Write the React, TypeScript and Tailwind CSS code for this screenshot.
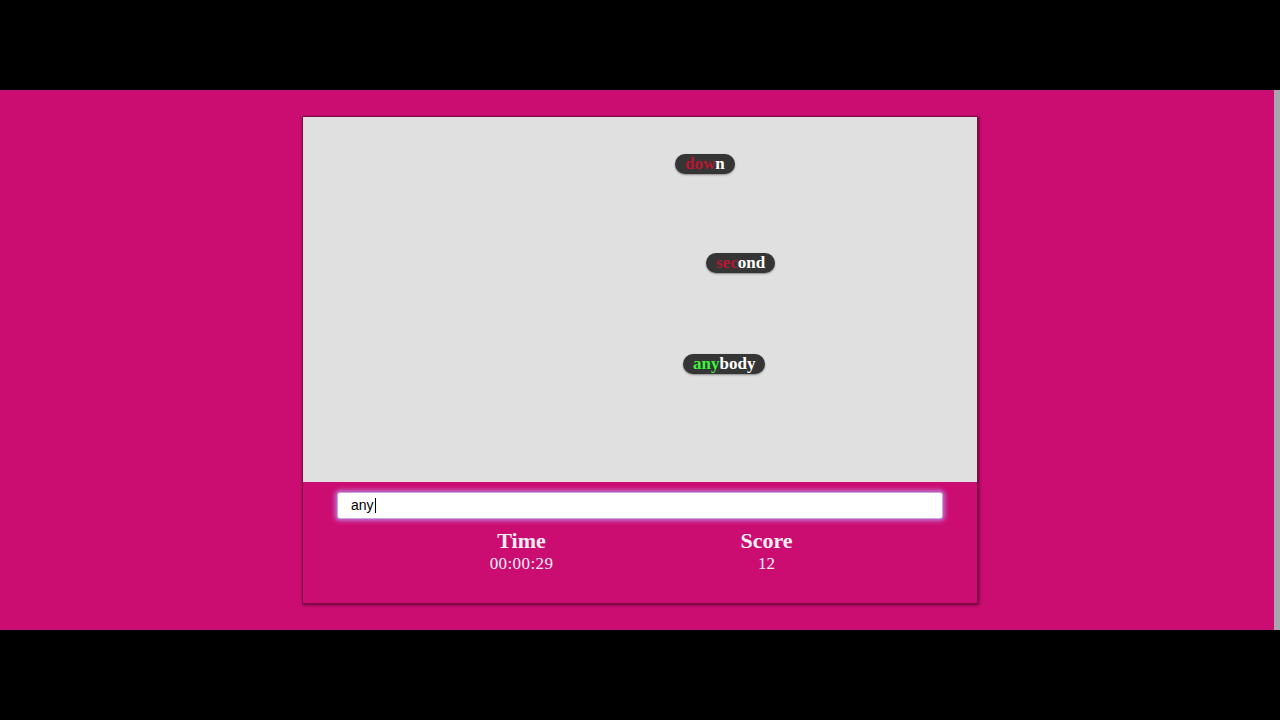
import React from "react";

function Pill({ left, top, hit, rest, hitColor }: { left: number; top: number; hit: string; rest: string; hitColor: string }) {
  return (
    <div
      className="absolute h-[20px] px-[10px] rounded-full bg-[#353535] shadow-[0_1px_2px_rgba(0,0,0,0.4)] flex items-center text-[17px] font-bold leading-[20px] text-white whitespace-nowrap"
      style={{ left, top, fontFamily: '"Liberation Serif", "Times New Roman", serif' }}
    >
      <span style={{ color: hitColor }}>{hit}</span>
      <span>{rest}</span>
    </div>
  );
}

export default function App() {
  return (
    <div className="w-[1280px] h-[720px] flex flex-col bg-black overflow-hidden">
      <div className="h-[90px] bg-black" />
      <div className="h-[540px] bg-[#cb0d72] relative flex justify-center pt-[26px]">
        <div className="w-[676px] h-[488px] border border-[#7e0a47] shadow-[1px_1px_3px_rgba(0,0,0,0.55)] flex flex-col">
          <div className="h-[365px] bg-[#e0e0e0] relative">
            <Pill left={372} top={37} hit="dow" rest="n" hitColor="#b8162f" />
            <Pill left={403} top={136} hit="sec" rest="ond" hitColor="#b8162f" />
            <Pill left={380} top={237} hit="any" rest="body" hitColor="#3df23d" />
          </div>
          <div className="flex-1 bg-[#cb0d72] flex flex-col pt-[10px] px-[34px]">
            <div className="h-[27px] bg-white rounded-[3px] border border-[#c9a3e6] shadow-[0_0_4px_2px_rgba(190,140,230,0.8)] flex items-center pl-[13px]">
              <span className="text-[14px] text-black" style={{ fontFamily: '"Liberation Sans", Arial, sans-serif' }}>
                any
              </span>
              <span className="w-px h-[15px] bg-black ml-px" />
            </div>
            <div
              className="flex pl-[62px] pt-[9px] text-white"
              style={{ fontFamily: '"Liberation Serif", "Times New Roman", serif' }}
            >
              <div className="w-[245px] flex flex-col items-center">
                <div className="text-[22px] font-bold leading-[25px] text-[#f6eef4]">Time</div>
                <div className="mt-px text-[17px] leading-[20px] tracking-[0.4px] text-[#f6eef4]">00:00:29</div>
              </div>
              <div className="w-[245px] flex flex-col items-center">
                <div className="text-[22px] font-bold leading-[25px] text-[#f6eef4]">Score</div>
                <div className="mt-px text-[17px] leading-[20px] text-[#f6eef4]">12</div>
              </div>
            </div>
          </div>
        </div>
        <div className="absolute right-0 top-0 w-[6px] h-full bg-[#a9a3ad]" />
      </div>
      <div className="h-[90px] bg-black" />
    </div>
  );
}
